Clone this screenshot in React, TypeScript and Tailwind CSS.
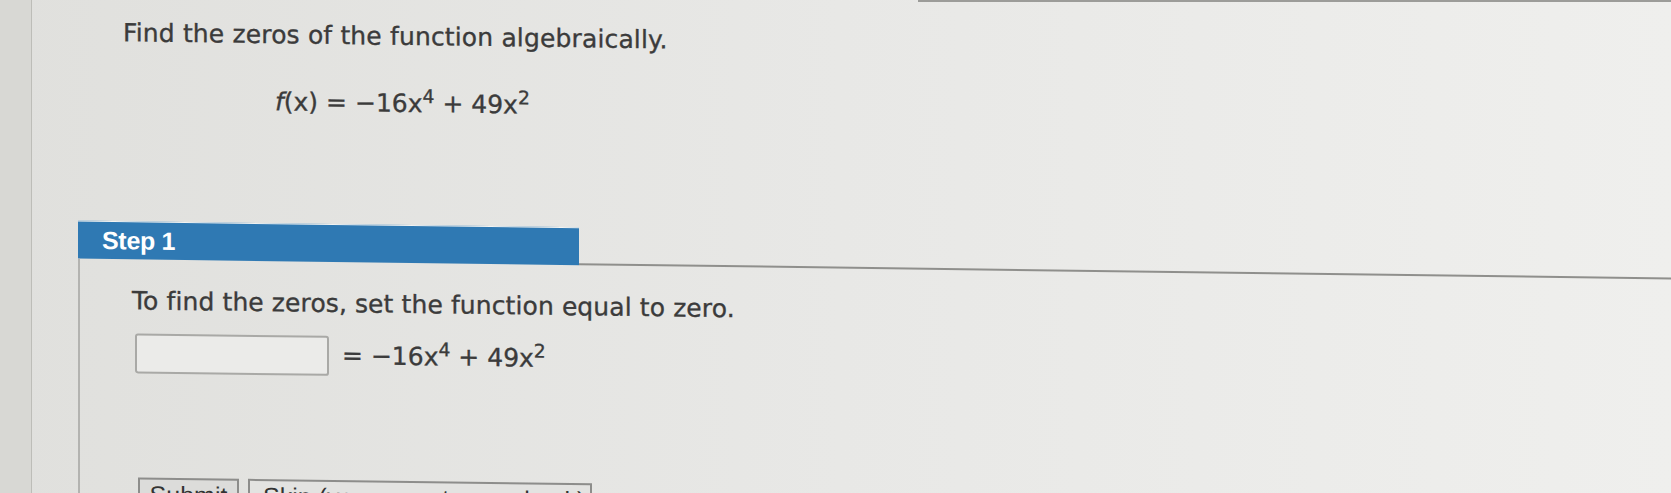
import React from "react";

const stroke = "[-webkit-text-stroke:0.35px_#3b3b3b]";

export default function App() {
  return (
    <div className="w-full h-[493px] overflow-hidden flex bg-linear-to-r from-[#e0e0dd] via-[#e8e8e6] to-[#efefed] text-[#3b3b3b] font-['DejaVu_Sans',sans-serif]">
      <div className="w-[32px] shrink-0 bg-[#d8d8d4] border-r border-[#bdbdb8]" />
      <div className="flex-1 flex flex-col min-w-0">
        <div className="h-[2px] shrink-0 ml-[886px] bg-[#9c9c99]" />
        <div className="flex-1 flex flex-col origin-top-left skew-y-[0.75deg]">
          <div className={`mt-[15px] pl-[91px] text-[25px] leading-[30px] tracking-[0.15px] ${stroke}`}>
            Find the zeros of the function algebraically.
          </div>
          <div className={`mt-[37px] pl-[243px] text-[25px] leading-[30px] whitespace-nowrap ${stroke}`}>
            <span className="italic">f</span>(x) = −16x<sup>4</sup> + 49x<sup>2</sup>
          </div>
          <div className="mt-[106px] ml-[46px] flex-1 flex flex-col">
            <div className="flex h-[38px]">
              <div className="w-[501px] h-full bg-[#2f79b3] flex items-center pl-[24px] border-t border-[#f4f4f2]">
                <span className="text-white font-bold text-[25px] leading-none tracking-[-0.3px] font-['Liberation_Sans',sans-serif]">
                  Step 1
                </span>
              </div>
              <div className="flex-1 border-b-2 border-[#8f8f8c]" />
            </div>
            <div className="flex-1 border-l-2 border-[#b3b3b0] pl-[52px] flex flex-col">
              <div className={`mt-[27px] text-[25px] leading-[30px] tracking-[0.1px] ${stroke}`}>
                To find the zeros, set the function equal to zero.
              </div>
              <div className="mt-[17px] flex items-start">
                <div className="ml-[3px] w-[194px] h-[40px] rounded-[3px] border-2 border-[#a9a9a6] bg-[#ebebe9]" />
                <div className={`ml-[13px] mt-[5px] text-[25px] leading-[30px] whitespace-nowrap ${stroke}`}>
                  = −16x<sup>4</sup> + 49x<sup>2</sup>
                </div>
              </div>
              <div className="mt-[104px] ml-[6px] flex gap-[9px] font-['Liberation_Sans',sans-serif] text-[25px] leading-[29px] text-[#333]">
                <div className="w-[101px] h-[38px] border-2 border-[#8d8d8b] bg-[#dcdcda] pt-[1px] text-center">
                  Submit
                </div>
                <div className="w-[344px] h-[38px] border-2 border-[#8d8d8b] bg-[#e3e3e1] pt-[1px] pl-[13px]">
                  Skip (you cannot come back)
                </div>
              </div>
            </div>
          </div>
        </div>
      </div>
    </div>
  );
}
